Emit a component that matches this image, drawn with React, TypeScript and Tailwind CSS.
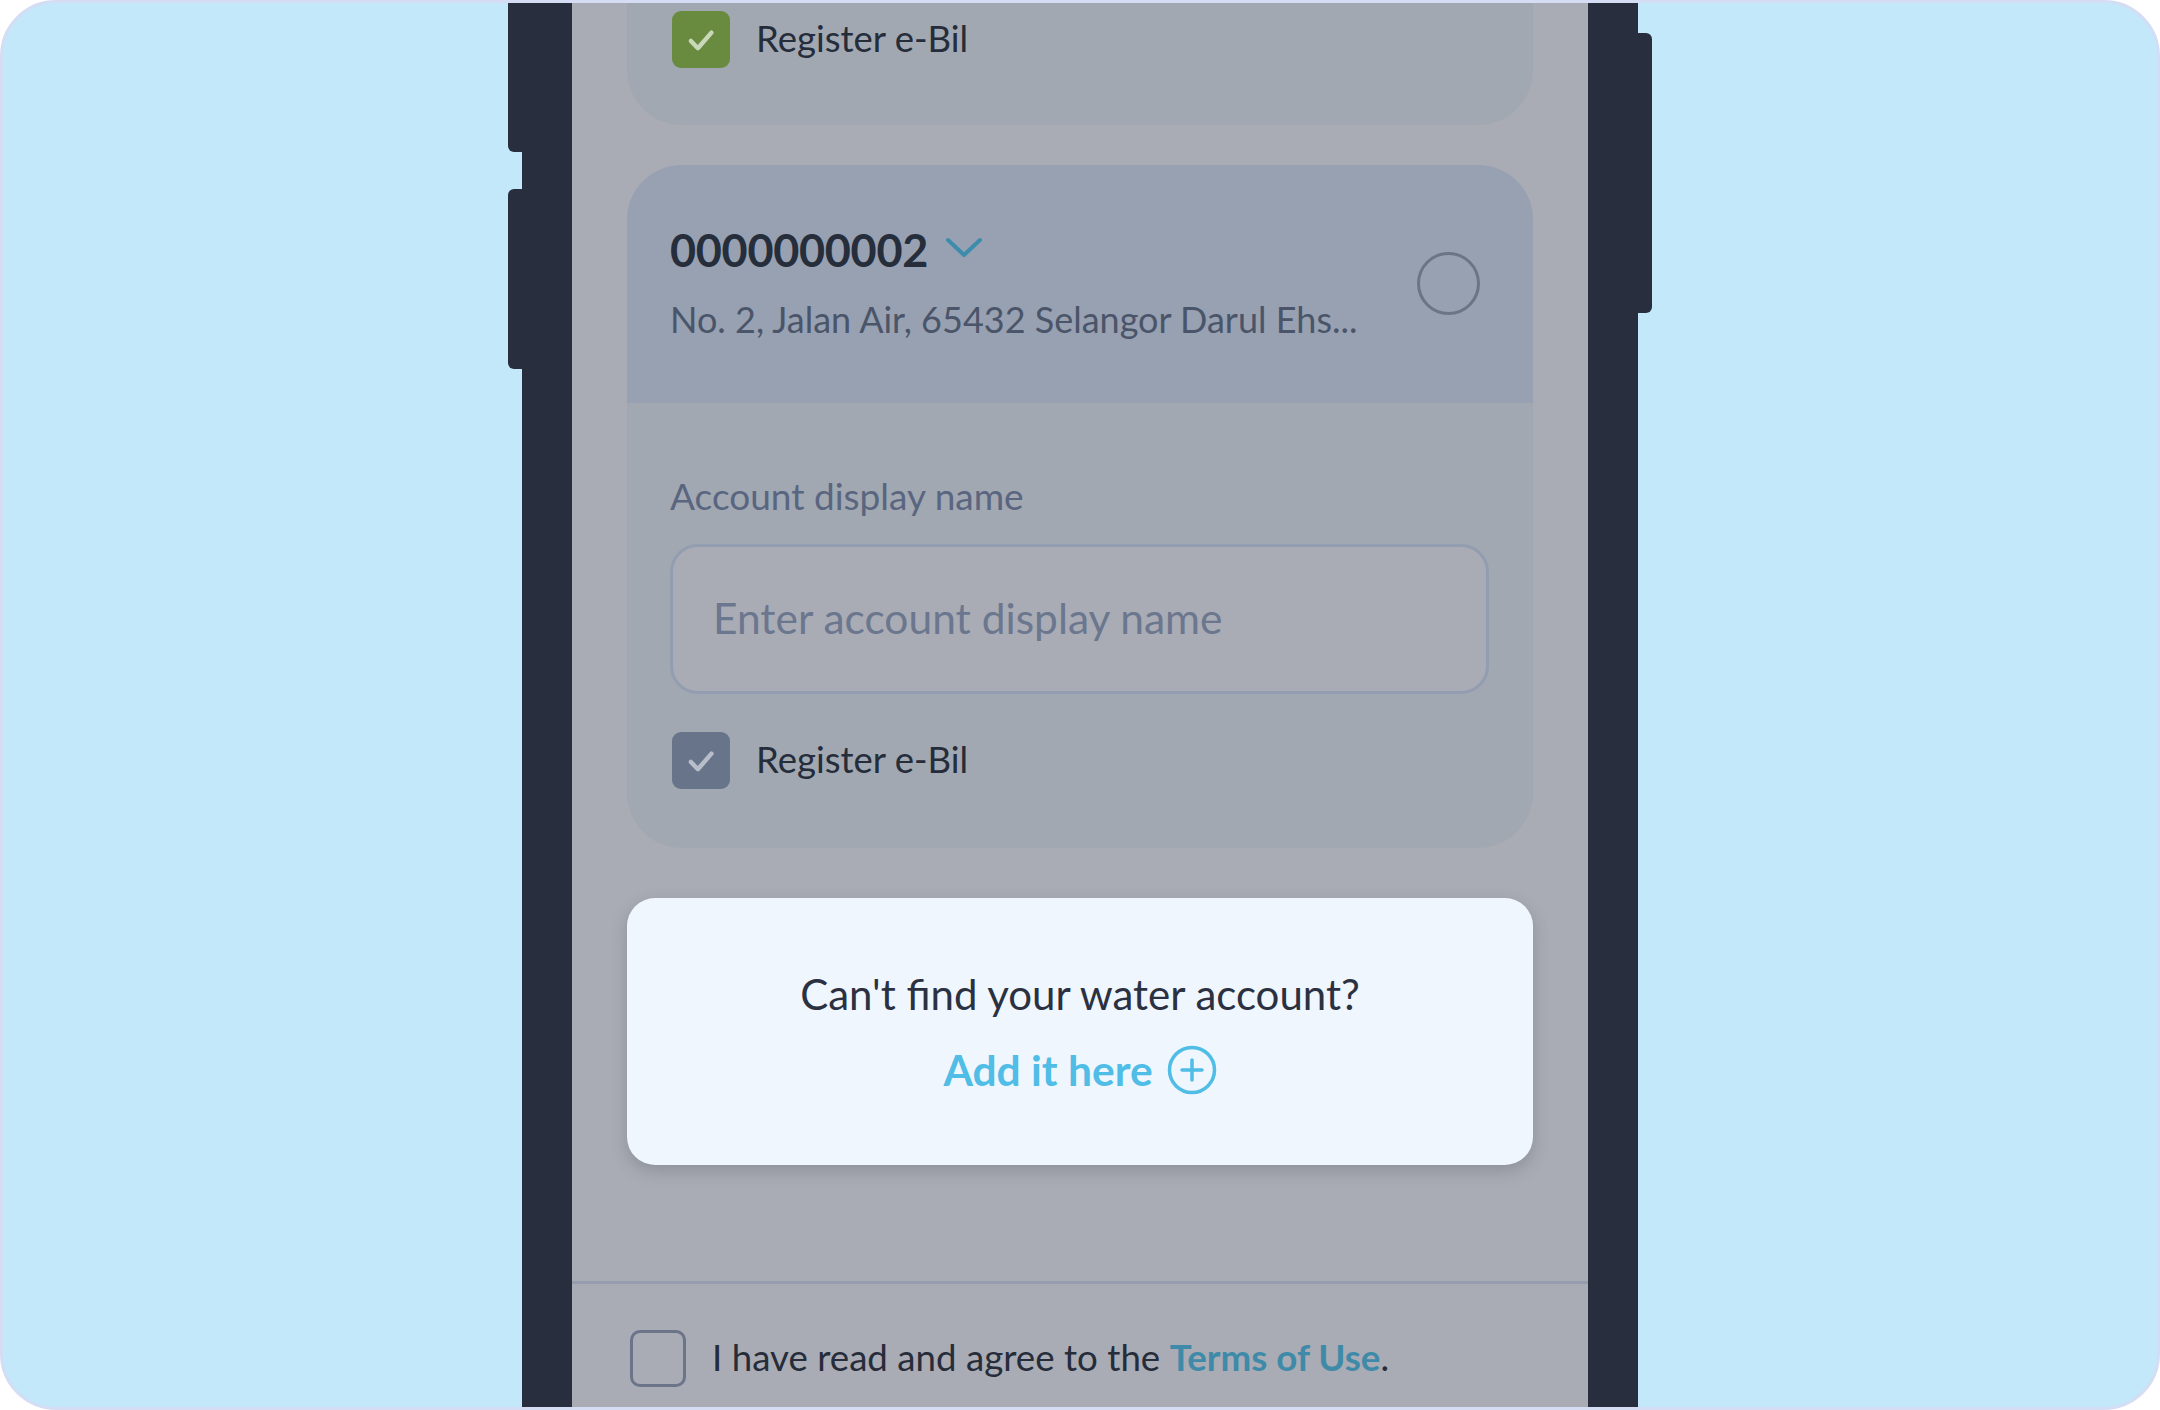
import type { ReactNode } from "react";

// Small check glyph used inside the filled checkboxes
function CheckMark({ className }: { className: string }) {
  return (
    <svg viewBox="0 0 24 24" className={className} fill="none" stroke="currentColor" strokeWidth={2.4} strokeLinecap="round" strokeLinejoin="round">
      <path d="M6.5 12.5l3.8 4 7.4-8.5" />
    </svg>
  );
}

function CheckRow({ boxClass, checkClass }: { boxClass: string; checkClass: string }) {
  return (
    <div className="flex items-center gap-[26px]">
      <div className={`w-[58px] h-[57px] rounded-[9px] flex items-center justify-center ${boxClass}`}>
        <CheckMark className={`w-[44px] h-[44px] ${checkClass}`} />
      </div>
      <span className="-mt-[4px] text-[36.5px] leading-[46px] text-[#252c3a]">Register e-Bil</span>
    </div>
  );
}

function Phone({ children }: { children: ReactNode }) {
  return (
    <div className="flex h-full">
      {/* volume / silent keys */}
      <div className="w-[14px] flex flex-col">
        <div className="h-[149px] bg-[#282e3e] rounded-bl-[6px]" />
        <div className="h-[180px] mt-[37px] bg-[#282e3e] rounded-l-[6px]" />
      </div>
      <div className="w-[1116px] h-full bg-[#282e3e] px-[50px]">
        <div className="h-full bg-[#a9acb4] flex flex-col overflow-hidden">{children}</div>
      </div>
      {/* power key */}
      <div className="w-[14px] pt-[30px]">
        <div className="h-[280px] bg-[#282e3e] rounded-r-[6px]" />
      </div>
    </div>
  );
}

export default function App() {
  return (
    <div className="w-[2160px] h-[1410px] bg-white font-['Lato',sans-serif]">
      <div className="w-full h-full rounded-[56px] border-[3px] border-[#d4ddf4] bg-[#c2e8fa] overflow-hidden flex justify-center">
        <Phone>
          <div className="px-[55px]">
            {/* previous account (scrolled up) */}
            <div className="rounded-b-[55px] bg-[#a1a8b2] pt-[8px] pb-[57px] px-[45px]">
              <CheckRow boxClass="bg-[#698b3f]" checkClass="text-[#c9d8b8]" />
            </div>

            {/* selected account */}
            <div className="mt-[40px] rounded-[55px] overflow-hidden bg-[#a1a8b2]">
              <div className="bg-[#97a1b2] pl-[43px] pr-[53px] pt-[59px] pb-[61px] flex items-center justify-between">
                <div>
                  <div className="flex items-center gap-[16px]">
                    <span className="text-[45px] leading-[52px] font-bold text-[#262d3b] tracking-[-0.3px]">0000000002</span>
                    <svg viewBox="0 0 40 24" className="w-[40px] h-[24px] mt-[-4px]" fill="none" stroke="#3d8cab" strokeWidth={4} strokeLinecap="round" strokeLinejoin="round">
                      <path d="M4 4l16 15 16-15" />
                    </svg>
                  </div>
                  <div className="mt-[20px] text-[36px] leading-[46px] text-[#4b5569]">No. 2, Jalan Air, 65432 Selangor Darul Ehs...</div>
                </div>
                <div className="w-[63px] h-[63px] rounded-full border-[3px] border-[#6c7586]" />
              </div>

              <div className="pl-[43px] pr-[44px] pt-[71px] pb-[59px]">
                <div className="text-[37px] leading-[44px] text-[#5a6580]">Account display name</div>
                <div className="mt-[26px] h-[150px] rounded-[28px] border-[3px] border-[#939db1] bg-[#a9acb4] flex items-center px-[40px]">
                  <span className="-mt-[2px] text-[42.5px] text-[#6b778f]">Enter account display name</span>
                </div>
                <div className="mt-[38px] pl-[2px]">
                  <CheckRow boxClass="bg-[#687489]" checkClass="text-[#b7bec9]" />
                </div>
              </div>
            </div>

            {/* add account prompt */}
            <div className="mt-[50px] h-[267px] rounded-[28px] bg-[#eff6fe] shadow-[0_6px_16px_rgba(60,66,80,0.25)] flex flex-col items-center justify-center">
              <div className="text-[42px] leading-[50px] text-[#2b3141]">Can't find your water account?</div>
              <div className="mt-[26px] flex items-center gap-[14px]">
                <span className="text-[42.5px] leading-[50px] font-bold text-[#4fbde6]">Add it here</span>
                <svg viewBox="0 0 50 50" className="w-[50px] h-[50px]" fill="none" stroke="#4fbde6" strokeWidth={3.5} strokeLinecap="round">
                  <circle cx="25" cy="25" r="22.5" />
                  <path d="M25 15v20M15 25h20" />
                </svg>
              </div>
            </div>
          </div>

          <div className="mt-[116px] border-t-[3px] border-[#959daf] pl-[58px] pt-[46px] flex items-center gap-[26px]">
            <div className="w-[56px] h-[57px] rounded-[10px] border-[3px] border-[#6b7489]" />
            <span className="-mt-[3px] text-[36.7px] leading-[46px] text-[#262c3a]">
              I have read and agree to the <span className="font-bold text-[#3f8aa8]">Terms of Use</span>.
            </span>
          </div>
        </Phone>
      </div>
    </div>
  );
}
